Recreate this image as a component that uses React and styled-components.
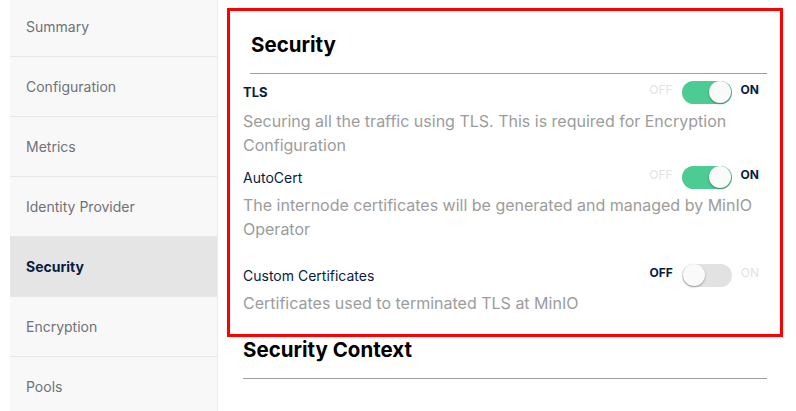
import React from "react";
import styled, { createGlobalStyle } from "styled-components";

const Global = createGlobalStyle`
  html, body { margin: 0; padding: 0; background: #fff; }
  body { font-family: Inter, "Noto Sans", sans-serif; overflow: hidden; }
  * { box-sizing: border-box; }
`;

const Page = styled.div`
  display: flex;
  align-items: flex-start;
  width: 796px;
  height: 411px;
  overflow: hidden;
`;

const Sidebar = styled.nav`
  margin-left: 10px;
  margin-top: -3px;
  width: 208px;
  background: #f8f8f8;
  border-right: 1px solid #ececec;
  display: flex;
  flex-direction: column;
  flex-shrink: 0;
`;

const NavItem = styled.div`
  height: 60px;
  border-bottom: 1px solid #e8e8e8;
  display: flex;
  align-items: center;
  padding-left: 16px;
  font-size: 14px;
  color: ${(p) => (p.$active ? "#081c42" : "#6f7277")};
  font-weight: ${(p) => (p.$active ? 700 : 400)};
  background: ${(p) => (p.$active ? "#e5e5e5" : "transparent")};
`;

const Main = styled.main`
  flex: 1;
  padding: 8px 29px 0 25px;
  display: flex;
  flex-direction: column;
`;

const Highlight = styled.section`
  margin: 0 -16px;
  border: 3px solid #ff0000;
  padding: 22px 13px 19px;
  display: flex;
  flex-direction: column;
`;

const Heading = styled.h3`
  margin: ${(p) => p.$margin || "0"};
  padding-left: ${(p) => p.$indent || 0}px;
  font-size: 20.5px;
  line-height: 24px;
  font-weight: 700;
  color: #000;
`;

const Rule = styled.hr`
  margin: ${(p) => p.$margin || "0"};
  margin-left: ${(p) => p.$indent || 0}px;
  border: 0;
  height: 1px;
  background: #9f9f9f;
`;

const Field = styled.div`
  margin-top: ${(p) => p.$top}px;
  display: flex;
  flex-direction: column;
`;

const FieldHead = styled.div`
  height: 24px;
  display: flex;
  align-items: center;
  justify-content: space-between;
  padding-right: 8px;
`;

const FieldLabel = styled.label`
  font-size: ${(p) => (p.$bold ? "13px" : "14px")};
  font-weight: ${(p) => (p.$bold ? 700 : 400)};
  color: #081c42;
`;

const Description = styled.div`
  margin-top: ${(p) => p.$top ?? 5}px;
  font-size: 16px;
  line-height: 24px;
  color: #9c9c9c;
`;

const ToggleWrap = styled.div`
  display: flex;
  align-items: center;
  gap: 9px;
`;

const StateLabel = styled.span`
  font-size: 12px;
  margin-bottom: 6px;
  color: ${(p) => (p.$active ? "#081c42" : "#e2e2e2")};
  font-weight: ${(p) => (p.$active ? 700 : 400)};
`;

const Track = styled.div`
  width: 50px;
  height: 23px;
  border-radius: 12px;
  background: ${(p) => (p.$on ? "#4ccb92" : "#e2e2e2")};
  display: flex;
  align-items: center;
  justify-content: ${(p) => (p.$on ? "flex-end" : "flex-start")};
  padding: 0 1px;
`;

const Knob = styled.div`
  width: 22px;
  height: 22px;
  border-radius: 50%;
  background: #fafafa;
  box-shadow: 0 1px 2px rgba(0, 0, 0, 0.35);
`;

function Toggle({ on }) {
  return (
    <ToggleWrap>
      <StateLabel $active={!on}>OFF</StateLabel>
      <Track $on={on}>
        <Knob />
      </Track>
      <StateLabel $active={on}>ON</StateLabel>
    </ToggleWrap>
  );
}

const nav = [
  "Summary",
  "Configuration",
  "Metrics",
  "Identity Provider",
  "Security",
  "Encryption",
  "Pools",
];

export default function App() {
  return (
    <>
      <Global />
      <Page>
        <Sidebar>
          {nav.map((n) => (
            <NavItem key={n} $active={n === "Security"}>
              {n}
            </NavItem>
          ))}
        </Sidebar>
        <Main>
          <Highlight>
            <Heading $indent={8}>Security</Heading>
            <Rule $margin="16px 0 0" $indent={7} />
            <Field $top={6}>
              <FieldHead>
                <FieldLabel $bold>TLS</FieldLabel>
                <Toggle on />
              </FieldHead>
              <Description>
                Securing all the traffic using TLS. This is required for
                Encryption Configuration
              </Description>
            </Field>
            <Field $top={8}>
              <FieldHead>
                <FieldLabel>AutoCert</FieldLabel>
                <Toggle on />
              </FieldHead>
              <Description $top={4}>
                The internode certificates will be generated and managed by
                MinIO Operator
              </Description>
            </Field>
            <Field $top={22}>
              <FieldHead>
                <FieldLabel>Custom Certificates</FieldLabel>
                <Toggle on={false} />
              </FieldHead>
              <Description $top={4}>
                Certificates used to terminated TLS at MinIO
              </Description>
            </Field>
          </Highlight>
          <Heading $margin="1px 0 0">Security Context</Heading>
          <Rule $margin="16px 0 0" />
        </Main>
      </Page>
    </>
  );
}
